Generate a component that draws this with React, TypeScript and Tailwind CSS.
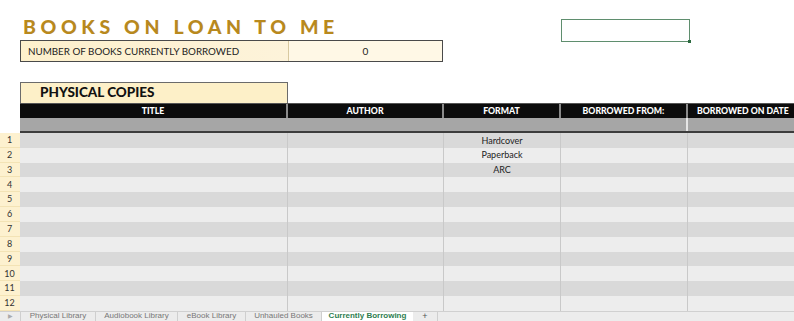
import React from "react";

const cols = [
  { w: "w-[268px]", label: "TITLE" },
  { w: "w-[156px]", label: "AUTHOR" },
  { w: "w-[117px]", label: "FORMAT" },
  { w: "w-[127px]", label: "BORROWED FROM:" },
];

const formats = ["Hardcover", "Paperback", "ARC"];

function DataRow({ n }: { n: number }) {
  const odd = n % 2 === 1;
  const bg = odd ? "bg-[#d9d9d9]" : "bg-[#ededed]";
  return (
    <div className="flex h-[14.83px]">
      <div className="w-[20px] shrink-0 bg-[#fdf1cf] flex items-center justify-center text-[9px] text-[#333] border-b border-[#f3e3b5] pr-[1px]">
        {n}
      </div>
      <div className={`flex flex-1 ${bg}`}>
        <div className="w-[268px] shrink-0 border-r border-[#c9c9c9]" />
        <div className="w-[156px] shrink-0 border-r border-[#c9c9c9]" />
        <div className="w-[117px] shrink-0 border-r border-[#c9c9c9] flex items-center justify-center text-[9px] text-[#222]">
          {formats[n - 1] ?? ""}
        </div>
        <div className="w-[127px] shrink-0 border-r border-[#c9c9c9]" />
        <div className="flex-1" />
      </div>
    </div>
  );
}

export default function App() {
  const tabs = [
    { label: "Physical Library", w: "w-[75px]" },
    { label: "Audiobook Library", w: "w-[82px]" },
    { label: "eBook Library", w: "w-[68px]" },
    { label: "Unhauled Books", w: "w-[76px]" },
  ];
  return (
    <div className="w-[794px] h-[321px] bg-white overflow-hidden flex flex-col relative font-['Lato','Liberation_Sans',sans-serif]">
      {/* selected cell overlay */}
      <div className="absolute left-[561px] top-[19px] w-[129px] h-[23px] border border-[#5f8e6e]">
        <div className="absolute right-[-2px] bottom-[-2px] w-[3px] h-[3px] bg-[#2d6a40]" />
      </div>

      <div className="h-[40px] pl-[23px] pt-[17px] shrink-0">
        <div className="text-[19.5px] leading-[20px] font-black text-[#b8891e] tracking-[4.6px] [word-spacing:0px] whitespace-nowrap">
          BOOKS ON LOAN TO ME
        </div>
      </div>

      <div className="ml-[20px] w-[423px] h-[22px] flex border border-[#4a4a4a] shrink-0">
        <div className="w-[268px] border-r border-[#d8c9a0] bg-gradient-to-r from-[#fdf0cc] to-[#fdf3da] flex items-center pl-[7px] text-[9.8px] text-[#222] whitespace-nowrap">
          NUMBER OF BOOKS CURRENTLY BORROWED
        </div>
        <div className="flex-1 bg-[#fff8e6] flex items-center justify-center text-[10px] text-[#222]">
          0
        </div>
      </div>

      <div className="h-[20px] shrink-0" />

      <div className="ml-[20px] w-[268px] h-[21px] bg-[#fdf0c8] border border-[#6b6b6b] border-b-0 flex items-center pl-[19px] shrink-0">
        <span className="text-[13.5px] font-black text-[#111] leading-none">PHYSICAL COPIES</span>
      </div>

      <div className="flex h-[15px] shrink-0">
        <div className="w-[20px] shrink-0" />
        <div className="flex flex-1 bg-[#0c0c0c] border-t border-[#555]">
          {cols.map((c) => (
            <div
              key={c.label}
              className={`${c.w} shrink-0 border-r-2 border-[#8a8a8a] flex items-center justify-center text-[8.7px] font-black text-white whitespace-nowrap`}
            >
              {c.label}
            </div>
          ))}
          <div className="flex-1 flex items-center pl-[9px] text-[8.7px] font-black text-white whitespace-nowrap overflow-hidden">
            BORROWED ON DATE
          </div>
        </div>
      </div>

      <div className="flex h-[15px] shrink-0">
        <div className="w-[20px] shrink-0" />
        <div className="flex flex-1 bg-[#a6a6a6] border-b-2 border-[#3c3c3c]">
          <div className="w-[668px] shrink-0 border-r-2 border-[#e6e6e6]" />
          <div className="flex-1" />
        </div>
      </div>

      <div className="flex flex-col shrink-0">
        {Array.from({ length: 12 }, (_, i) => (
          <DataRow key={i} n={i + 1} />
        ))}
      </div>

      <div className="flex-1 flex bg-[#ececec] border-t border-[#d0d0d0] text-[8px] text-[#777] font-['Liberation_Sans',sans-serif] leading-none overflow-hidden">
        <div className="w-[21px] flex items-center justify-center border-r border-[#cfcfcf] text-[6px] text-[#aaa]">▶</div>
        {tabs.map((t) => (
          <div key={t.label} className={`${t.w} flex items-center justify-center border-r border-[#cfcfcf] whitespace-nowrap`}>
            {t.label}
          </div>
        ))}
        <div className="w-[91px] flex items-center justify-center bg-white text-[#2e7d4f] font-bold whitespace-nowrap">
          Currently Borrowing
        </div>
        <div className="w-[25px] flex items-center justify-center border-r border-[#cfcfcf] text-[9px] text-[#555] leading-none">+</div>
      </div>
    </div>
  );
}
